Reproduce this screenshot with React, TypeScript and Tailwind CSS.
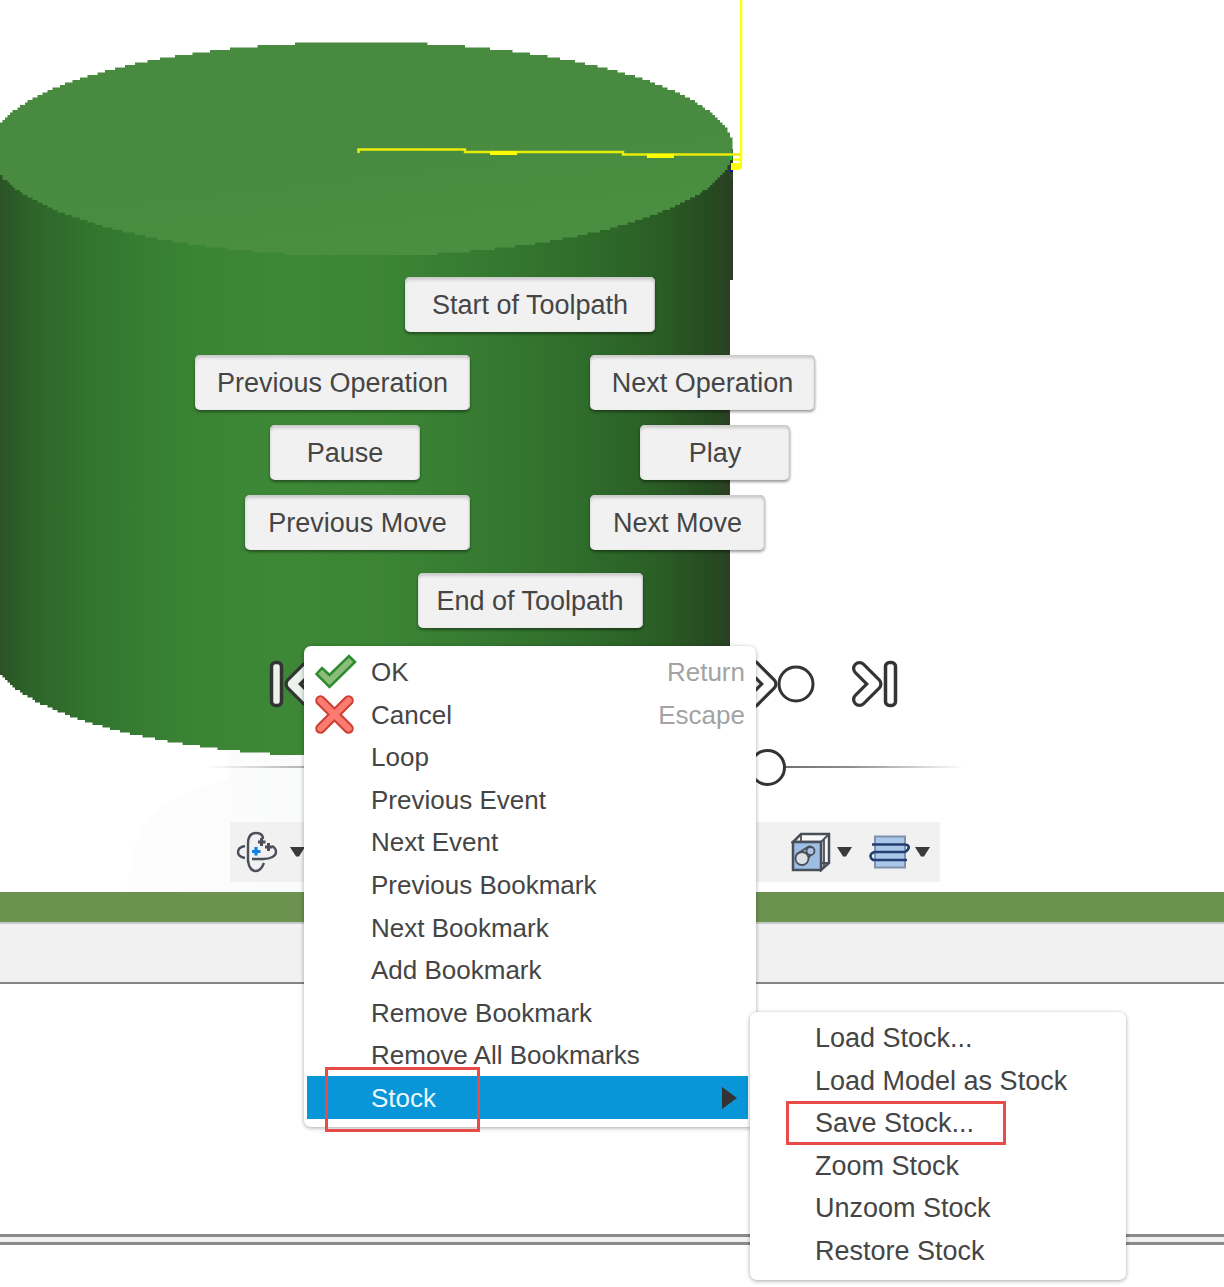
import React from "react";

const STEP = 2.5;

function snap(v: number) {
  return Math.round(v / STEP) * STEP;
}

/* Stair-stepped ellipse outline, like an aliased 3D render */
function ellipsePoints(cx: number, cy: number, rx: number, ry: number) {
  const right: string[] = [];
  const left: string[] = [];
  const start = snap(cy - ry);
  for (let y = start; y < cy + ry; y += STEP) {
    const t = (y + STEP / 2 - cy) / ry;
    const w = Math.sqrt(Math.max(0, 1 - t * t)) * rx;
    const r = snap(cx + w);
    const l = snap(cx - w);
    right.push(`${r},${y} ${r},${y + STEP}`);
    left.unshift(`${l},${y + STEP} ${l},${y}`);
  }
  return [...right, ...left].join(" ");
}

const TOP = ellipsePoints(361, 149, 372, 107);
const BOTTOM = ellipsePoints(360, 649, 370, 108);

function StockModel() {
  return (
    <svg className="absolute left-0 top-0" width="760" height="892" viewBox="0 0 760 892" aria-hidden="true">
      <defs>
        <linearGradient id="side" gradientUnits="userSpaceOnUse" x1="0" y1="0" x2="733" y2="0">
          <stop offset="0" stopColor="#2b5326" />
          <stop offset="0.04" stopColor="#2d6329" />
          <stop offset="0.12" stopColor="#32752e" />
          <stop offset="0.25" stopColor="#398334" />
          <stop offset="0.38" stopColor="#3d8837" />
          <stop offset="0.52" stopColor="#3b8535" />
          <stop offset="0.66" stopColor="#367a31" />
          <stop offset="0.8" stopColor="#2f6c2b" />
          <stop offset="0.9" stopColor="#2a5d25" />
          <stop offset="0.97" stopColor="#264a21" />
          <stop offset="1" stopColor="#2c3e25" />
        </linearGradient>
        <linearGradient id="face" x1="0" y1="0" x2="0.4" y2="1">
          <stop offset="0" stopColor="#488b40" />
          <stop offset="0.5" stopColor="#478a40" />
          <stop offset="1" stopColor="#4a8e41" />
        </linearGradient>
        <linearGradient id="haze" x1="0" y1="0" x2="1" y2="0">
          <stop offset="0" stopColor="#fdfdfd" />
          <stop offset="1" stopColor="#fafbfb" />
        </linearGradient>
      </defs>
      <path d="M303 740H228V780C170 795 140 815 134 850L125 892H303z" fill="url(#haze)" />
      <g fill="url(#side)">
        <path d="M0 149H733V280H730V649H0z" />
        <polygon points={BOTTOM} />
      </g>
      <polygon points={TOP} fill="url(#face)" />
      <path d="M731 164h2v14h-3z" fill="#2a4a24" />
      <path d="M358.5 153V149.500H465V152H623V154.500H741" fill="none" stroke="#e9ec0a" strokeWidth="2.500" />
      <path d="M490 151h27v4h-27zM647 154h27v4h-27z" fill="#ffff00" />
      <path d="M741 0V160M733 159.500h9" stroke="#ffff00" strokeWidth="2.500" />
      <path d="M742 158v10l-3 2h-8v-7h9v-5z" fill="#ffff00" />
      <path d="M731 156v4" stroke="#00d020" strokeWidth="2" />
      <path d="M730 171h3" stroke="#1010b0" strokeWidth="2" />
    </svg>
  );
}

function MarkingButton({ label, className }: { label: string; className: string }) {
  return (
    <button
      type="button"
      className={`h-[55px] rounded-[5px] bg-[#f1f1f1] text-[27px] leading-8 text-[#454545] shadow-[inset_0_3px_3px_#cbcbcb,inset_-1px_0_1px_#c4c4c4,0_2px_3px_rgba(0,0,0,0.4)] ${className}`}
    >
      {label}
    </button>
  );
}

function MarkingMenu() {
  return (
    <div className="absolute left-[195px] top-[277px] grid w-[670px] grid-cols-2 gap-x-[120px] gap-y-[15px]">
      <MarkingButton label="Start of Toolpath" className="col-span-2 mb-2 w-[250px] justify-self-center" />
      <MarkingButton label="Previous Operation" className="w-[275px] justify-self-end" />
      <MarkingButton label="Next Operation" className="w-[225px]" />
      <MarkingButton label="Pause" className="mr-[50px] w-[150px] justify-self-end" />
      <MarkingButton label="Play" className="ml-[50px] w-[150px]" />
      <MarkingButton label="Previous Move" className="w-[225px] justify-self-end" />
      <MarkingButton label="Next Move" className="w-[175px]" />
      <MarkingButton label="End of Toolpath" className="col-span-2 mt-2 w-[225px] justify-self-center" />
    </div>
  );
}

/* Rounded bar and chevron pair; the outline is a wide dark stroke under a narrower light one */
function SkipIcon({ fill, flip }: { fill: string; flip?: boolean }) {
  return (
    <svg width="48" height="48" viewBox="0 0 48 48" className={flip ? "-scale-x-100" : ""} aria-hidden="true">
      <g fill="none" strokeLinecap="round" strokeLinejoin="round">
        <path d="M8.500 8.500L24 24L8.500 39.500" stroke="#343434" strokeWidth="15" />
        <path d="M8.500 8.500L24 24L8.500 39.500" stroke={fill} strokeWidth="8.500" />
      </g>
      <rect x="34.500" y="2.500" width="10" height="43" rx="4" fill={fill} stroke="#343434" strokeWidth="3.500" />
    </svg>
  );
}

function Playback() {
  return (
    <div className="absolute left-[268px] top-[660px] flex w-[631px] items-center justify-between">
      <button type="button" aria-label="Go to start">
        <SkipIcon fill="#ebf2ea" flip />
      </button>
      <button type="button" aria-label="Next move" className="mr-[34px] ml-auto">
        <svg width="82" height="48" viewBox="0 0 82 48" aria-hidden="true">
          <g fill="none" strokeLinecap="round" strokeLinejoin="round">
            <path d="M18 7L35 24L18 41" stroke="#343434" strokeWidth="15" />
            <path d="M18 7L35 24L18 41" stroke="#fff" strokeWidth="8.500" />
          </g>
          <circle cx="61" cy="24" r="17" fill="#fff" stroke="#343434" strokeWidth="3" />
        </svg>
      </button>
      <button type="button" aria-label="Go to end">
        <SkipIcon fill="#fff" />
      </button>
    </div>
  );
}

function Timeline() {
  return (
    <input
      type="range"
      aria-label="Simulation position"
      min={0}
      max={1000}
      defaultValue={752}
      className="absolute left-[205px] top-[748px] h-[38px] w-[760px] appearance-none bg-[linear-gradient(to_right,transparent,#a8a8a8_15%,#6c6c6c_75%,#8f8f8f_85%,transparent)] bg-[length:100%_2px] bg-center bg-no-repeat [&::-webkit-slider-thumb]:h-[37px] [&::-webkit-slider-thumb]:w-[37px] [&::-webkit-slider-thumb]:appearance-none [&::-webkit-slider-thumb]:rounded-full [&::-webkit-slider-thumb]:border-[3px] [&::-webkit-slider-thumb]:border-solid [&::-webkit-slider-thumb]:border-[#343434] [&::-webkit-slider-thumb]:bg-white"
    />
  );
}

function Caret() {
  return (
    <svg width="15" height="10" viewBox="0 0 15 10" aria-hidden="true">
      <path d="M0 0H15L9 9.500H6z" fill="#3a3a3a" />
    </svg>
  );
}

function OrbitIcon() {
  return (
    <svg width="42" height="42" viewBox="0 0 42 42" fill="none" stroke="#4a4f5a" strokeWidth="2.400" aria-hidden="true">
      <path d="M12 31V13C12 5 15 2 20 2C24 2 27 4 27 8" />
      <path d="M12 30C13 37 16 40 20 40C24 40 26 37 28 32" />
      <path d="M9 15C4 16 2 18 2 21C2 24 4 26 9 27" />
      <path d="M16 28H27C35 28 40 25 40 21C40 18 38 16 36 15" />
      <path d="M25.500 7V15M22 11H29.500M32.500 12V20M29 16H36.500" strokeWidth="3" />
      <path d="M20 16V24.500M16 20.500H24.500" stroke="#1080e8" strokeWidth="3.200" />
    </svg>
  );
}

function DisplayIcon() {
  return (
    <svg width="40" height="40" viewBox="0 0 40 40" aria-hidden="true">
      <g stroke="#484f58" strokeWidth="2.500">
        <path d="M10 2H38V31L30 38V10H2z" fill="#f8f8f8" />
        <path d="M10 2V9M38 2L30 10M33 7V35M38 31H30" fill="none" strokeWidth="1.800" />
        <rect x="2" y="10" width="28" height="28" fill="#9dbde2" />
        <path d="M6 22L16 15.500C19 12 24 17 22 20L15 29z" fill="#a9c4e4" strokeWidth="1.800" />
        <circle cx="19.500" cy="19" r="4" fill="#a9c4e4" strokeWidth="1.800" />
        <circle cx="11" cy="26.500" r="6.500" fill="#dcdfe3" strokeWidth="1.800" />
      </g>
    </svg>
  );
}

function SectionIcon() {
  return (
    <svg width="42" height="34" viewBox="0 0 42 34" aria-hidden="true">
      <rect x="6" y="1.500" width="30" height="31" fill="#a9c8ea" stroke="#7f93ad" strokeWidth="2" />
      <g fill="none" stroke="#243d73" strokeWidth="2.600">
        <path d="M3 9.500H36C41 10 41 14 36 17H6C1 18 0 22 4 25H38" />
      </g>
    </svg>
  );
}

function NavToolbar() {
  return (
    <div className="absolute left-[230px] top-[822px] flex h-[60px] w-[710px] items-center bg-[#f1f1f1] pr-2.5 pl-1.5">
      <button type="button" aria-label="Orbit" className="flex items-center gap-3">
        <OrbitIcon />
        <Caret />
      </button>
      <button type="button" aria-label="Display settings" className="ml-auto flex items-center gap-1.5">
        <DisplayIcon />
        <Caret />
      </button>
      <button type="button" aria-label="Section view" className="ml-[17px] flex items-center gap-1">
        <SectionIcon />
        <Caret />
      </button>
    </div>
  );
}

function CheckIcon() {
  return (
    <svg width="42" height="36" viewBox="0 0 42 36" aria-hidden="true">
      <path d="M1.500 20L7 14L14.500 21L34 2L40 8L14.500 33z" fill="#8cbd78" stroke="#2e8b32" strokeWidth="2.500" />
    </svg>
  );
}

function CrossIcon() {
  return (
    <svg width="40" height="40" viewBox="0 0 40 40" aria-hidden="true">
      <g fill="none" strokeLinecap="round">
        <path d="M5.500 5.500L33.500 33.500M33.500 5.500L5.500 33.500" stroke="#cc3f33" strokeWidth="10.500" />
        <path d="M5.500 5.500L33.500 33.500M33.500 5.500L5.500 33.500" stroke="#fb7b70" strokeWidth="6.500" />
      </g>
    </svg>
  );
}

type Item = { label: string; hint?: string; icon?: React.ReactNode };

const MENU: Item[] = [
  { label: "OK", hint: "Return", icon: <CheckIcon /> },
  { label: "Cancel", hint: "Escape", icon: <CrossIcon /> },
  { label: "Loop" },
  { label: "Previous Event" },
  { label: "Next Event" },
  { label: "Previous Bookmark" },
  { label: "Next Bookmark" },
  { label: "Add Bookmark" },
  { label: "Remove Bookmark" },
  { label: "Remove All Bookmarks" },
];

const SUBMENU = ["Load Stock...", "Load Model as Stock", "Save Stock...", "Zoom Stock", "Unzoom Stock", "Restore Stock"];

function ContextMenu() {
  return (
    <div
      role="menu"
      className="absolute left-[304px] top-[646px] w-[452px] rounded-[7px] bg-white pt-[5px] pb-2 pl-[3px] shadow-[0_1px_4px_rgba(0,0,0,0.35)]"
    >
      <div className="grid h-[468px] auto-rows-fr text-[26px] leading-8 text-[#454545]">
        {MENU.map((item) => (
          <button key={item.label} type="button" role="menuitem" className="flex items-center pr-[11px] pl-2 text-left">
            <span className="w-14 shrink-0">{item.icon}</span>
            <span className="grow">{item.label}</span>
            {item.hint && <span className="text-[#a3a3a3]">{item.hint}</span>}
          </button>
        ))}
        <button
          type="button"
          role="menuitem"
          aria-haspopup="menu"
          className="mr-2 flex items-center justify-between bg-[#0896d9] pr-[11px] pl-16 text-left text-[#eef8fd]"
        >
          Stock
          <svg width="15" height="22" viewBox="0 0 15 22" aria-hidden="true">
            <path d="M0 0L15 11L0 22z" fill="#333" />
          </svg>
        </button>
      </div>
    </div>
  );
}

function StockSubmenu() {
  return (
    <div
      role="menu"
      className="absolute left-[750px] top-[1012px] w-[376px] rounded-[7px] bg-white pt-[5px] pb-2 shadow-[0_1px_4px_rgba(0,0,0,0.35)]"
    >
      <div className="grid h-[255px] auto-rows-fr text-[27px] leading-8 text-[#454545]">
        {SUBMENU.map((label) => (
          <button key={label} type="button" role="menuitem" className="flex items-center pl-[65px] text-left">
            {label}
          </button>
        ))}
      </div>
    </div>
  );
}

export default function App() {
  return (
    <div className="relative flex min-h-screen flex-col overflow-hidden bg-white font-['Liberation_Sans',Arial,sans-serif]">
      <main className="relative h-[892px] shrink-0">
        <StockModel />
        <MarkingMenu />
        <Playback />
        <Timeline />
        <NavToolbar />
      </main>
      <div className="h-[30px] bg-[#6c9250]" />
      <div className="h-[62px] border-t-2 border-b-2 border-t-[#c9c9c9] border-b-[#858585] bg-[#f1f1f1]" />
      <div className="h-[250px]" />
      <div className="h-[11px] border-t-[3px] border-b-[3px] border-[#8a8a8a] bg-[#f1f1f1]" />
      <ContextMenu />
      <StockSubmenu />
      <div className="pointer-events-none absolute left-[325px] top-[1067px] h-[65px] w-[155px] border-[3px] border-[#e84c48]" />
      <div className="pointer-events-none absolute left-[786px] top-[1101px] h-11 w-[220px] border-[3px] border-[#e84c48]" />
    </div>
  );
}
